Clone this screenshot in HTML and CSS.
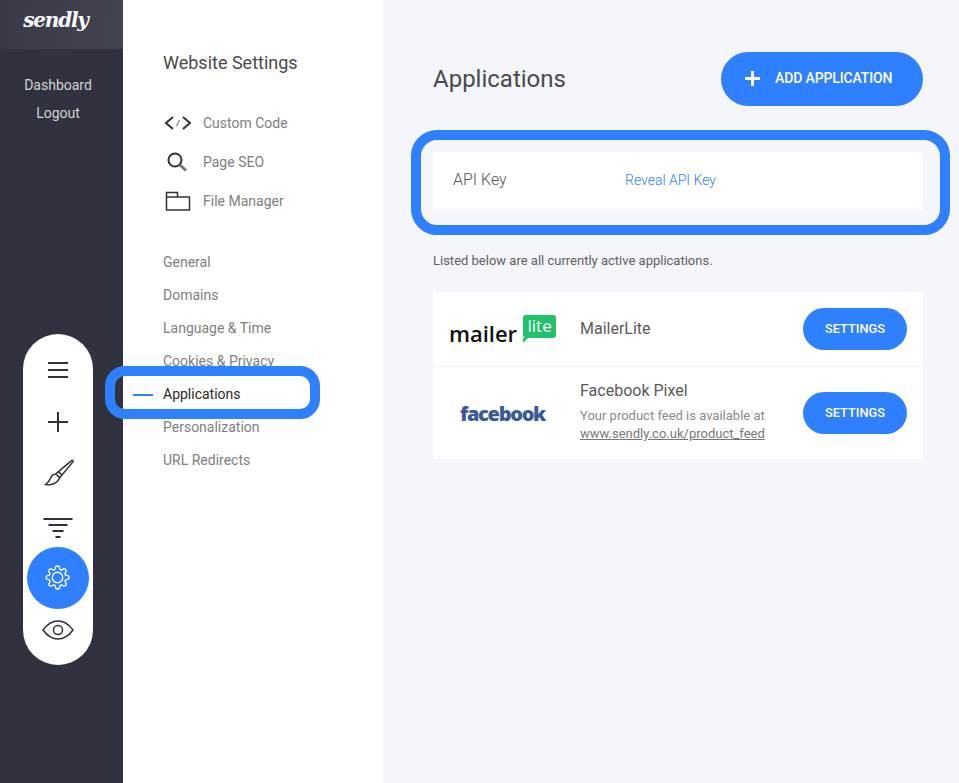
FILE: index.html
```html
<!DOCTYPE html>
<html lang="en">
<head>
    <meta charset="UTF-8">
    <meta name="viewport" content="width=device-width, initial-scale=1.0">
    <title>Applications - Website Settings</title>
    <link rel="stylesheet" href="styles.css">
</head>
<body>
    <div class="shell">
        <aside class="sidebar">
            <div class="brand">sendly</div>
            <nav class="account-nav">
                <a href="#">Dashboard</a>
                <a href="#">Logout</a>
            </nav>
            <div class="tool-pill">
                <div class="tool">
                    <svg width="24" height="20" viewBox="0 0 24 20"><path d="M2 3h20M2 10h20M2 17h20" class="ink-2"/></svg>
                </div>
                <div class="tool">
                    <svg width="24" height="24" viewBox="0 0 24 24"><path d="M2 12h20M12 2v20" class="ink-2"/></svg>
                </div>
                <div class="tool">
                    <svg width="32" height="32" viewBox="0 0 32 32"><path d="M29.600 2.600c.9-.6 1.900.4 1.300 1.300L20 17l-3.600-3.400zM16.400 13.600l-2.600 2.400 3.800 3.600 2.400-2.600M13.800 16c-3 .2-4.200 1.500-5 3.800-.7 2-2 4.200-5.300 6.700 5.500.6 9.500-.5 11.900-3.200 1.700-1.900 2.300-3.200 2.200-3.700" class="ink-1"/></svg>
                </div>
                <div class="tool tool-filter">
                    <svg width="30" height="20" viewBox="0 0 30 20"><path d="M0.500 1h29M5.500 7h19M9.500 13h11M12.500 19h5" class="ink-2"/></svg>
                </div>
                <div class="tool-active">
                    <svg width="25" height="25" viewBox="0 0 24 24"><circle cx="12" cy="12" r="5" class="white-line"/><path class="white-line" d="M19.400 15a1.650 1.650 0 0 0 .33 1.820l.06.06a2 2 0 0 1 0 2.830 2 2 0 0 1-2.830 0l-.06-.06a1.650 1.650 0 0 0-1.820-.33 1.650 1.650 0 0 0-1 1.510V21a2 2 0 0 1-2 2 2 2 0 0 1-2-2v-.09A1.650 1.650 0 0 0 9 19.400a1.650 1.650 0 0 0-1.820.33l-.06.06a2 2 0 0 1-2.830 0 2 2 0 0 1 0-2.830l.06-.06a1.650 1.650 0 0 0 .33-1.820 1.650 1.650 0 0 0-1.510-1H3a2 2 0 0 1-2-2 2 2 0 0 1 2-2h.09A1.650 1.650 0 0 0 4.600 9a1.650 1.650 0 0 0-.33-1.820l-.06-.06a2 2 0 0 1 0-2.830 2 2 0 0 1 2.830 0l.06.06a1.650 1.650 0 0 0 1.820.33H9a1.650 1.650 0 0 0 1-1.510V3a2 2 0 0 1 2-2 2 2 0 0 1 2 2v.09a1.650 1.650 0 0 0 1 1.510 1.650 1.650 0 0 0 1.820-.33l.06-.06a2 2 0 0 1 2.830 0 2 2 0 0 1 0 2.830l-.06.06a1.650 1.650 0 0 0-.33 1.820V9a1.650 1.650 0 0 0 1.510 1H21a2 2 0 0 1 2 2 2 2 0 0 1-2 2h-.09a1.650 1.650 0 0 0-1.510 1z"/></svg>
                </div>
                <div class="tool tool-eye">
                    <svg width="32" height="20" viewBox="0 0 32 20"><path d="M1 10C5 4.500 10 1 16 1s11 3.500 15 9c-4 5.500-9 9-15 9S5 15.500 1 10z" class="ink-1"/><circle cx="16" cy="10" r="4.500" class="ink-1"/></svg>
                </div>
            </div>
        </aside>

        <section class="settings">
            <h2>Website Settings</h2>
            <ul class="tool-links">
                <li>
                    <svg width="28" height="16" viewBox="0 0 28 16"><path d="M10 2 3 8l7 6M20 2l7 6-7 6" class="ink-2"/><path d="M16.500 5l-3 6" class="grey-1"/></svg>
                    Custom Code
                </li>
                <li>
                    <svg width="28" height="22" viewBox="0 0 28 22"><circle cx="12" cy="9" r="6.500" class="ink-2"/><path d="M17 14l6 5.500" class="grey-3"/></svg>
                    Page SEO
                </li>
                <li>
                    <svg width="28" height="20" viewBox="0 0 28 20"><path d="M3.500 6V1.500h11V6M3.500 6h23v13h-23z" class="ink-1"/></svg>
                    File Manager
                </li>
            </ul>
            <ul class="section-links">
                <li>General</li>
                <li>Domains</li>
                <li>Language &amp; Time</li>
                <li>Cookies &amp; Privacy</li>
                <li class="current">Applications</li>
                <li>Personalization</li>
                <li>URL Redirects</li>
            </ul>
        </section>

        <main class="content">
            <header class="content-head">
                <h1>Applications</h1>
                <button class="btn-add"><span class="plus"></span>ADD APPLICATION</button>
            </header>

            <div class="api-card">
                <span class="api-label">API Key</span>
                <a href="#" class="api-link">Reveal API Key</a>
            </div>

            <p class="note">Listed below are all currently active applications.</p>

            <div class="app-list">
                <div class="app-row">
                    <div class="app-logo">
                        <span class="mailer">mailer</span>
                        <span class="lite">lite</span>
                    </div>
                    <div class="app-info">
                        <div class="app-name">MailerLite</div>
                    </div>
                    <button class="btn-settings">SETTINGS</button>
                </div>
                <div class="app-row app-row-tall">
                    <div class="app-logo">
                        <span class="fb">facebook</span>
                    </div>
                    <div class="app-info">
                        <div class="app-name">Facebook Pixel</div>
                        <p>Your product feed is available at<br><a href="#">www.sendly.co.uk/product_feed</a></p>
                    </div>
                    <button class="btn-settings">SETTINGS</button>
                </div>
            </div>
        </main>

        <div class="ring ring-nav"></div>
        <div class="ring ring-api"></div>
    </div>
</body>
</html>
```

FILE: styles.css
```css
* { box-sizing: border-box; }
body {
    margin: 0;
    font-family: Roboto, Arial, sans-serif;
    background-color: #f4f6fb;
    color: #444;
}
ul { list-style: none; margin: 0; padding: 0; }
a { text-decoration: none; }
button { font-family: inherit; border: none; cursor: pointer; }
svg { display: block; fill: none; }

.ink-1 { stroke: #2f323e; stroke-width: 1.5; }
.ink-2 { stroke: #2f323e; stroke-width: 2; }
.grey-1 { stroke: #666; stroke-width: 1; }
.grey-3 { stroke: #777; stroke-width: 3; }
.white-line { stroke: white; stroke-width: 1.3; }

.shell {
    position: relative;
    display: flex;
    height: 783px;
    overflow: hidden;
}

/* dark sidebar */
.sidebar {
    width: 123px;
    flex: none;
    background-color: #30333f;
}
.brand {
    height: 49px;
    padding: 3px 12px 0 0;
    background: linear-gradient(100deg, #383a47, #42444f);
    color: white;
    font-family: "DejaVu Serif", serif;
    font-style: italic;
    font-weight: bold;
    font-size: 20px;
    line-height: 34px;
    letter-spacing: -1.2px;
    text-align: center;
}
.account-nav {
    display: flex;
    flex-direction: column;
    padding-top: 22px;
    text-align: center;
    width: 116px;
}
.account-nav a {
    color: #d2d2d2;
    font-size: 14px;
    line-height: 28px;
}
.tool-pill {
    width: 70px;
    height: 331px;
    margin: 207px 0 0 23px;
    padding: 10px 0 14px;
    background: white;
    border-radius: 35px;
    display: flex;
    flex-direction: column;
    align-items: center;
}
.tool {
    height: 52px;
    width: 100%;
    display: flex;
    align-items: center;
    justify-content: center;
}
.tool-filter {
    height: 47px;
    align-items: flex-end;
    padding-bottom: 9px;
}
.tool-eye { height: 42px; }
.tool-active {
    width: 62px;
    height: 62px;
    flex: none;
    padding: 0 1px 1px 0;
    border-radius: 50%;
    background-color: #2f80ff;
    display: flex;
    align-items: center;
    justify-content: center;
}

/* settings column */
.settings {
    width: 260px;
    flex: none;
    background: white;
    padding: 52px 0 0 40px;
}
.settings h2 {
    margin: 0 0 29px;
    font-size: 18px;
    font-weight: 400;
    line-height: 22px;
    color: #4a4a4a;
}
.tool-links { margin-bottom: 26px; }
.tool-links li {
    display: flex;
    align-items: center;
    gap: 12px;
    height: 39px;
    font-size: 14px;
    color: #808080;
}
.section-links li {
    height: 33px;
    line-height: 33px;
    font-size: 14px;
    color: #808080;
}
.section-links .current {
    position: relative;
    color: #2a2a2a;
}
.section-links .current::before {
    content: "";
    position: absolute;
    left: -30px;
    top: 16px;
    width: 20px;
    height: 2px;
    background-color: #2f80ff;
}

/* main content */
.content {
    flex: 1;
    padding: 52px 36px 0 50px;
}
.content-head {
    display: flex;
    align-items: center;
    justify-content: space-between;
}
h1 {
    margin: 0;
    font-size: 24px;
    font-weight: 400;
    color: #4a4a4a;
}
.btn-add {
    width: 202px;
    height: 54px;
    padding: 0 0 2px 24px;
    border-radius: 27px;
    background-color: #2f80ff;
    color: white;
    font-size: 14px;
    font-weight: 500;
    letter-spacing: -0.14px;
    display: flex;
    align-items: center;
}
.plus {
    width: 15px;
    height: 15px;
    margin-right: 15px;
    background:
        linear-gradient(white, white) center / 100% 3px no-repeat,
        linear-gradient(white, white) center / 3px 100% no-repeat;
}
.api-card {
    display: flex;
    align-items: center;
    height: 57px;
    margin-top: 46px;
    padding: 0 0 2px 20px;
    background: white;
}
.api-label {
    width: 172px;
    font-size: 16px;
    font-weight: 300;
    color: #555;
}
.api-link {
    font-size: 14px;
    font-weight: 300;
    color: #2f80ff;
}
.note {
    margin: 43px 0 23px;
    font-size: 13px;
    line-height: 17px;
    color: #606060;
}
.app-list { background: white; }
.app-row {
    display: flex;
    align-items: center;
    height: 75px;
    padding-right: 16px;
    border-bottom: 1px solid #f1f3f7;
}
.app-row-tall {
    height: 92px;
    border-bottom: none;
}
.app-logo {
    width: 147px;
    flex: none;
    display: flex;
    align-items: flex-end;
    justify-content: center;
    gap: 6px;
    padding-right: 8px;
}
.mailer {
    font-family: "Open Sans", sans-serif;
    font-size: 22px;
    font-weight: 600;
    line-height: 26px;
    margin-bottom: -2px;
    color: #111;
}
.lite {
    position: relative;
    width: 33px;
    height: 23px;
    margin-bottom: 6px;
    border-radius: 3px;
    background-color: #21c16b;
    color: white;
    font-family: "Open Sans", sans-serif;
    font-size: 17px;
    line-height: 22px;
    text-align: center;
}
.lite::after {
    content: "";
    position: absolute;
    left: 0;
    bottom: -5px;
    border-top: 5px solid #21c16b;
    border-right: 5px solid transparent;
}
.fb {
    font-family: "Open Sans", sans-serif;
    font-size: 20px;
    font-weight: 800;
    letter-spacing: -1.3px;
    color: #3b5998;
}
.app-info { flex: 1; margin-top: -2px; }
.app-name {
    font-size: 16px;
    color: #5a5a5a;
}
.app-info p {
    margin: 7px 0 0;
    font-size: 13px;
    line-height: 18px;
    color: #8a8a8a;
}
.app-info a {
    color: #777;
    text-decoration: underline;
}
.btn-settings {
    width: 104px;
    height: 42px;
    padding-bottom: 2px;
    border-radius: 21px;
    background-color: #2f80ff;
    color: white;
    font-size: 12.8px;
    font-weight: 500;
}

/* highlight rings drawn over the screenshot */
.ring {
    position: absolute;
    border: 10px solid #2f80ff;
    pointer-events: none;
}
.ring-nav {
    left: 105px;
    top: 366px;
    width: 215px;
    height: 53px;
    border-radius: 20px;
}
.ring-api {
    left: 411px;
    top: 130px;
    width: 539px;
    height: 105px;
    border-radius: 26px;
}
```
